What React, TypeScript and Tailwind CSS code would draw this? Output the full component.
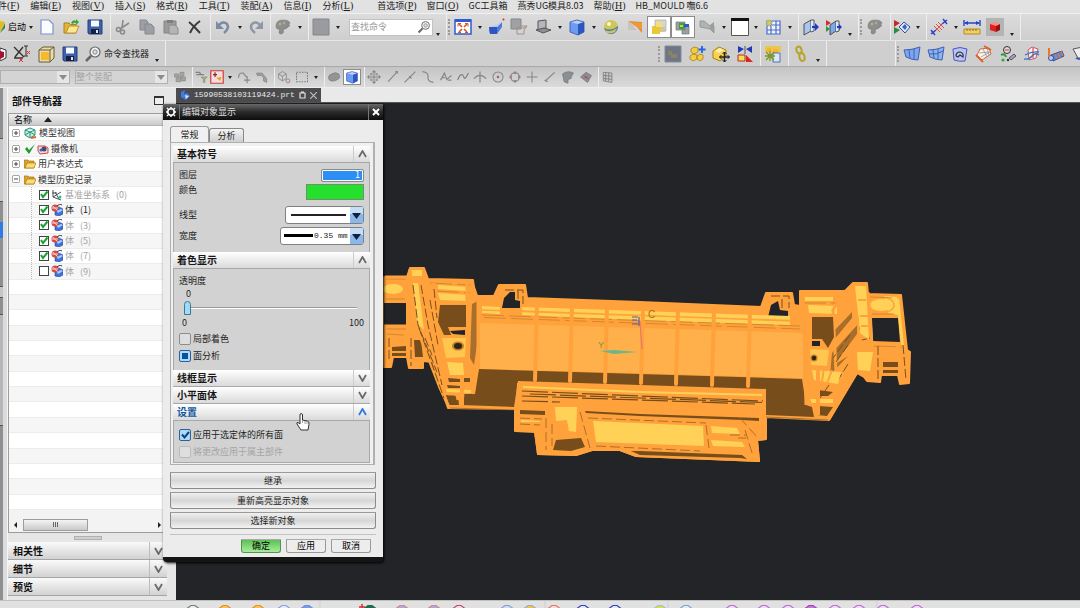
import React from "react";

const CJK = "font-['Noto_Sans_CJK_SC','Liberation_Sans',sans-serif]";

/* ---------- toolbar drawings, all on a 16 x 16 grid ---------- */
const palette = (
  <>
    <path d="M1 7Q1 1 8 1Q14 1 15 4L12 8Q11 11 8 10Q10 15 5 15Q3 14 5 10Q1 11 1 7Z" fill="#8f8f89" stroke="#7a7a75" strokeWidth=".6" />
    <circle cx="5" cy="5" r="1.2" fill="#b9b3a0" />
    <circle cx="9" cy="4" r="1.2" fill="#aaa" />
    <path d="M12 1l3 6-4 3z" fill="#8a8a8a" />
  </>
);
const disk = (
  <>
    <path d="M1 1h14v14H2L1 14z" fill="#3f5fa8" stroke="#24407e" />
    <path d="M4 1.5h8v6H4z" fill="#f4f8ff" />
    <path d="M4 10h8v5H4z" fill="#16203d" />
    <path d="M9 11h2v3H9z" fill="#dfe7f5" />
  </>
);
const ICONS: Record<string, React.ReactNode> = {
  newFile: <path d="M2 1h8l4 4v10H2z" fill="#fbfcff" stroke="#7d8fd6" strokeWidth="1.2" />,
  open: (
    <>
      <path d="M1 14V4h5l1.500 1.500H13V14z" fill="#e2b43c" stroke="#a8802a" />
      <path d="M3 14L6 7h10l-3 7z" fill="#fde98c" stroke="#b8923a" />
      <path d="M8 4q2-4 5-2V0l3 3-3 3V4q-2-1-3 1z" fill="#3ba53a" />
    </>
  ),
  disk,
  cut: (
    <g stroke="#8a8a8a" fill="none" strokeWidth="1.600">
      <path d="M8 1L7 9M14 4L5 10" />
      <circle cx="3.500" cy="10.500" r="2" />
      <circle cx="7.500" cy="13" r="2" />
    </g>
  ),
  copy: (
    <g fill="#9c9fa4" stroke="#858890">
      <path d="M1 1h6l2 2v8H1z" />
      <path d="M6 5h6l3 3v7H6z" />
    </g>
  ),
  paste: (
    <>
      <path d="M1 2h12v12H1z" fill="#9b9b98" stroke="#848480" />
      <path d="M4 1h6v3H4z" fill="#7d7d7b" />
      <path d="M6 6h6l3 3v6H6z" fill="#b3b5b8" stroke="#898b90" />
    </>
  ),
  del: <path d="M2 3Q7 7 13 14M13 2Q6 7 3 14" stroke="#3a3a3a" strokeWidth="2" fill="none" />,
  undo: (
    <>
      <path d="M3 7Q8 1 12 5Q15 9 9 14" stroke="#7b8ba6" strokeWidth="2.500" fill="none" />
      <path d="M1 2v8h8z" fill="#7b8ba6" />
    </>
  ),
  redo: (
    <>
      <path d="M13 7Q8 1 4 5Q1 9 7 14" stroke="#8d97a6" strokeWidth="2.500" fill="none" />
      <path d="M15 2v8H7z" fill="#8d97a6" />
    </>
  ),
  palette,
  square: <path d="M0 0h16v16H0z" fill="#9a9ba1" stroke="#85868b" strokeWidth="1" />,
  fit: (
    <>
      <path d="M0 1h16v14H0z" fill="#fff" stroke="#2d5bd0" strokeWidth="1.500" />
      <path d="M0 0h16v3H0z" fill="#2d5bd0" />
      <path d="M4 5l3 3M12 5L9 8M4 13l3-3M12 13l-3-3" stroke="#d4532a" strokeWidth="1.600" />
      <path d="M3 4.500h3M3 4.500v3M13 4.500h-3M13 4.500v3M3 13.500h3M13 13.500h-3" stroke="#d4532a" />
    </>
  ),
  brush: (
    <>
      <path d="M1 8h8v7H2q-1-3-1-7z" fill="#2f55c4" />
      <path d="M9 8l5-5v5l-5 7z" fill="#4f78dc" />
      <path d="M1 8l7-2 6-3-5 5z" fill="#b4cbf9" />
      <circle cx="15.500" cy=".5" r="1" fill="#e02020" />
    </>
  ),
  shade: (
    <>
      <path d="M0 0h10v10H0z" fill="#9fa1a6" stroke="#85878c" />
      <path d="M6 9l4-2h6l-3 4v4H6zM6 9h7M13 9l3-2" fill="none" stroke="#a5918c" />
    </>
  ),
  plane: (
    <>
      <path d="M3 2l8-1v8l-8 2z" fill="#b4b7ba" stroke="#555" />
      <path d="M1 11l8-2 7 2-8 3z" fill="#8e9194" stroke="#555" />
    </>
  ),
  cube: (
    <>
      <path d="M1 3l7-2 7 2-6 2z" fill="#b9d0fb" />
      <path d="M1 3l8 2v11l-8-3z" fill="#6d9bf2" />
      <path d="M15 3L9 5v11l6-3z" fill="#2c56c2" />
      <path d="M1 3l7-2 7 2v10l-6 3-8-3z" fill="none" stroke="#2b50b0" strokeWidth=".8" />
    </>
  ),
  sphere: (
    <>
      <circle cx="8" cy="8" r="7" fill="#d0c655" />
      <path d="M1 9q7 4 14-2v2q-2 6-7 6t-7-6z" fill="#4a7fb5" />
      <path d="M2 11q6 3 12-2l-2 4q-4 2-8 1z" fill="#cfc65a" />
      <circle cx="6" cy="5" r="2" fill="#fbf7c8" />
    </>
  ),
  flag: (
    <>
      <path d="M1 2l14 1v11l-5-6z" fill="#e58b2e" />
      <path d="M1 2v9h8z" fill="#b9b5ae" />
      <path d="M3 3l12 1v7l-4-3z" fill="#ee9a3c" />
      <path d="M1 2l6 5v4H1z" fill="#c9c4bc" />
    </>
  ),
  flagGray: (
    <>
      <path d="M1 2h4l6 5h4v7l-4-4-5-1-5-1z" fill="#b0b3b4" stroke="#8a8d8e" strokeWidth=".8" />
      <path d="M15 3v11l-4-5V6z" fill="#9b9e9f" />
    </>
  ),
  boxes: (
    <>
      <path d="M4 1h11v11H4z" fill="#d6d6cf" stroke="#aaa" strokeWidth=".7" />
      <path d="M1 7h8v8H1z" fill="#e9c831" />
      <path d="M5 3h6v5H5z" fill="#f3df7a" />
      <path d="M9 8h5v5H9z" fill="#cfc797" />
    </>
  ),
  boxes2: (
    <>
      <path d="M1 3h9v8H1zM7 7h7v8H7z" fill="#9aa0a2" stroke="#777" strokeWidth=".7" />
      <path d="M4 4h6v6H4z" fill="#38a046" />
      <path d="M9 5h5v3H9z" fill="#2d59c9" />
      <path d="M5 6h3v2H5z" fill="#d9d33a" />
    </>
  ),
  window: (
    <>
      <path d="M-.5-.5h17v17h-17z" fill="#fff" stroke="#555" />
      <path d="M-1-1h18v3H-1z" fill="#111" />
    </>
  ),
  gridStar: (
    <>
      <path d="M2 2h13v13H2z" fill="#eef3ff" />
      <path d="M2 2h13v13H2zM6 2v13M11 2v13M2 6h13M2 11h13" stroke="#4b6cc9" fill="none" strokeWidth="1.200" />
      <path d="M4 0v8M0 4h8M1 1l6 6M7 1L1 7" stroke="#d8cf3c" />
    </>
  ),
  door: (
    <>
      <path d="M1 5l7-4v11l-7 4z" fill="#a8c6ee" stroke="#333" strokeWidth=".8" />
      <path d="M8 1h3v11l-3 1" fill="#dce8f8" stroke="#333" strokeWidth=".8" />
      <path d="M9 7h3V4l4 4-4 4V9H9z" fill="#2438c8" />
    </>
  ),
  door2: (
    <>
      <path d="M4 6l6-4v10l-6 4z" fill="#7fa9e6" stroke="#333" strokeWidth=".8" />
      <path d="M10 2h3v10l-3 1" fill="#dce8f8" stroke="#333" strokeWidth=".8" />
      <path d="M0 1l5 3-5 3z" fill="#d32f2f" />
      <path d="M0 7l4 3-4 3z" fill="#2f9a3b" />
      <path d="M11 7h2V5l3 3-3 3V9h-2z" fill="#2438c8" />
    </>
  ),
  cubes: (
    <>
      <path d="M0 1l6 3-6 4z" fill="#c62828" />
      <path d="M0 8l6 3-6 4z" fill="#2e8b3a" />
      <path d="M5 8l5-5 6 5-5 6z" fill="#dce8ff" stroke="#334d9e" />
      <path d="M8 8l3-3 2 3-2 3z" fill="#3d62c4" />
    </>
  ),
  measure: (
    <>
      <path d="M1 15L15 1" stroke="#d9534a" strokeWidth="1" />
      <path d="M0 11l4 5M0 15l5-4M16 5l-4-5M16 1l-5 4" fill="none" stroke="#2745c9" strokeWidth="1.500" />
      <path d="M3 7l6 6M5 5l6 6M7 3l6 6" stroke="#d9534a" />
    </>
  ),
  ruler: (
    <>
      <path d="M0 1v6M16 1v6M1 4h14" stroke="#2745c9" strokeWidth="1.400" />
      <path d="M0 4l4-2v4zM16 4l-4-2v4z" fill="#2745c9" />
      <path d="M0 10h16v5H0z" fill="#f2cf63" stroke="#b28a27" />
      <path d="M3 10v2M6 10v2M9 10v2M12 10v2" stroke="#8a6a1c" />
    </>
  ),
  redCube: (
    <>
      <path d="M-1-1h18v18H-1z" fill="#b4b4b4" />
      <path d="M3 5l5-2 5 2-4 2z" fill="#ff8a80" />
      <path d="M3 5l6 2v6l-6-2z" fill="#e02020" />
      <path d="M13 5L9 7v6l4-2z" fill="#9c0f0f" />
    </>
  ),
  axes: (
    <>
      <path d="M0 1l10 10M9 1L1 11M0 12h9" stroke="#333" strokeWidth="1.400" />
      <path d="M12 0v10M10 0h4M10 10h4" stroke="#333" />
      <path d="M5 12l4 4M9 12l-4 4M13 5l3 3M16 5l-3 3" stroke="#d33" />
    </>
  ),
  goldBox: (
    <>
      <path d="M1 4l4-3h11v11l-4 4H1z" fill="#e9dcb0" stroke="#6b5a2a" />
      <path d="M3 6h8v8H3z" fill="#f4b92c" />
      <path d="M1 4h11v12M12 4l4-3" fill="none" stroke="#6b5a2a" />
    </>
  ),
  lens: (
    <>
      <circle cx="10" cy="6" r="5" fill="#f3f3f3" stroke="#666" strokeWidth="1.200" />
      <circle cx="10" cy="6" r="2.200" fill="#ddd" stroke="#888" />
      <path d="M6 10l-5 5" stroke="#666" strokeWidth="2.500" />
    </>
  ),
  darkBox: (
    <>
      <path d="M0 0h16v16H0z" fill="#6f7683" stroke="#848b98" />
      <path d="M3 5h4v3h5v4H6V9H3z" fill="#8c826a" />
    </>
  ),
  goldPlus: (
    <>
      <path d="M2 3l3-2 4 1v4L5 8 2 6zM1 10l3-2 4 1v4l-4 2-3-2zM8 10l3-2 3 1v4l-3 2-3-2z" fill="#f4cd3c" stroke="#a9801c" strokeWidth=".8" />
      <path d="M13 0v7M9.500 3.500h7" stroke="#2264e0" strokeWidth="1.800" />
    </>
  ),
  goldMove: (
    <>
      <path d="M0 5l6-4 7 3v6l-6 5-7-3z" fill="#f7d350" stroke="#a9801c" />
      <path d="M2 5l5-3 4 2-5 3z" fill="#fff0b0" />
      <path d="M11.500 6v10M6.500 11h10" stroke="#222" strokeWidth="1.500" />
      <path d="M9.500 8l2-2 2 2M9.500 14l2 2 2-2M8.500 9l-2 2 2 2M14.500 9l2 2-2 2" stroke="#222" fill="none" />
    </>
  ),
  bowtie: (
    <>
      <path d="M1 0l6 3-6 4zM15 0L9 3l6 4z" fill="#2238b8" />
      <path d="M8 0v8" stroke="#555" />
      <path d="M1 9h7v6H1z" fill="#f6e14a" stroke="#b23" />
      <path d="M9 9l7 7H9z" fill="#d22" />
    </>
  ),
  starDoc: (
    <>
      <path d="M0 0h16v6H0z" fill="#edc64e" />
      <path d="M8 3h5v4H8zM2 2h4v4H2z" fill="#f5b52b" />
      <path d="M8 7h7v9H8z" fill="#dfe7f7" stroke="#4a6fb8" />
      <path d="M5 5v10M0 10h10M1 6l8 8M9 6l-8 8" stroke="#7b9a1e" strokeWidth="1.300" />
    </>
  ),
  chain: (
    <g fill="none" stroke="#b9a42a" strokeWidth="2">
      <ellipse cx="6" cy="4" rx="2.500" ry="3.500" transform="rotate(-20 6 4)" />
      <ellipse cx="9" cy="11" rx="2.500" ry="4" transform="rotate(-15 9 11)" />
    </g>
  ),
  surf: (
    <>
      <path d="M0 4q8 0 16-3l-2 13q-6 0-12-3z" fill="#7fa6ec" stroke="#3b62b5" />
      <path d="M5 4l1 8M10 3v10" stroke="#3b62b5" fill="none" />
    </>
  ),
  surfGrid: (
    <>
      <path d="M0 4q8 0 16-3l-2 13q-6 0-12-3z" fill="#8fb1ee" stroke="#3b62b5" />
      <path d="M5 4l1 8M10 3v10M1 8q8 1 14-3" stroke="#3b62b5" fill="none" />
    </>
  ),
  surfRing: (
    <>
      <path d="M1 3q7-3 14 0l-2 12q-5 1-11-1z" fill="#b9c4f5" stroke="#4a56c0" />
      <path d="M4 10q0-4 4-4 4 1 3 5l-3-2-2 2z" fill="none" stroke="#333" strokeWidth="1.200" />
    </>
  ),
  surfRed: (
    <>
      <path d="M4 3l9-1 2 6-9 6-5-5z" fill="#f8f2ee" stroke="#c96a3f" />
      <path d="M7 3l4 8M11 2l2 7M3 7l10-1M5 11l9-5" stroke="#888" strokeWidth=".7" />
      <path d="M0 9l7 7M8 0l7 4" stroke="#e0612c" strokeWidth="2" />
    </>
  ),
  ringParts: (
    <>
      <circle cx="7" cy="4" r="3.500" fill="#ddd" stroke="#333" />
      <path d="M5 4h4" stroke="#d33" />
      <path d="M9 12l5-4 2 2-5 4z" fill="#a79be0" stroke="#554" />
      <path d="M1 9q4-2 5 2" stroke="#2f9a3b" strokeWidth="2" fill="none" />
      <circle cx="3" cy="14" r="1.600" fill="#3a3" />
      <circle cx="8" cy="14" r="1.200" fill="#333" />
    </>
  ),
  sheets: (
    <>
      <path d="M4 4l4-3 6 2-2 9-7 2z" fill="#f7efef" stroke="#cc5b5b" />
      <path d="M1 9q7-4 14-3M0 13q5 1 8-3t7-1" stroke="#3977c8" fill="none" strokeWidth="1.300" />
      <path d="M9 2v10" stroke="#c33" />
    </>
  ),
  tube: (
    <>
      <path d="M3 9l11-4 2 5-11 5z" fill="#5a86e0" stroke="#2b4ea8" />
      <circle cx="3" cy="12" r="2.500" fill="#b7cdf7" stroke="#2b4ea8" />
      <path d="M7 8l2 5M10 7l2 5M13 5l2 5" stroke="#e8772e" strokeWidth="1.300" />
      <path d="M1 2v9" stroke="#e8772e" strokeWidth="2" />
    </>
  ),
  cup: (
    <>
      <path d="M1 3q7-3 15 0l-3 9H6z" fill="#eee" stroke="#555" />
      <path d="M4 12q5 3 11-3" stroke="#4a56c0" strokeWidth="2" fill="none" />
    </>
  ),
  /* selection bar, muted */
  tags: <path d="M1 4h5v4H1zM3 9h6v5H3zM8 2h5v5H8zM10 8h5v5h-5zM6 6l4 4" fill="#a5a5a2" stroke="#8d8d8a" />,
  filterY: (
    <>
      <path d="M1 2h5l2 3h4M2 5h7" fill="none" stroke="#7d8485" strokeWidth="1.800" />
      <path d="M8 8h8l-3 3v4h-2v-4z" fill="#b0a878" stroke="#8f8a70" strokeWidth=".8" />
    </>
  ),
  redFrame: (
    <>
      <path d="M0 0h16v16H0z" fill="#f1dede" stroke="#cf3b36" strokeWidth="1.500" />
      <path d="M3 5h5M5.500 2v6" stroke="#8f1f1f" strokeWidth="1.500" />
      <path d="M7 9l7-1-2 5z" fill="#e8a520" />
    </>
  ),
  turn: <path d="M1 9Q1 2 7 3L12 9M12 7v9M8 12h8" stroke="#888" fill="none" strokeWidth="1.500" />,
  pipe: <path d="M1 3h7l6 7v5l-4-2V9L7 6H2z" fill="#9f9f9f" stroke="#858585" />,
  cubeGray: (
    <g fill="none" stroke="#8f8f8f" strokeWidth="1.200">
      <path d="M1 4l5-3 5 3v6l-5 3-5-3zM1 4l5 3 5-3M6 7v6" />
      <circle cx="13" cy="13" r="2.500" stroke="#a77" />
    </g>
  ),
  marquee: <path d="M1 2h14v12H1z" fill="none" stroke="#777" strokeDasharray="2 1.500" strokeWidth="1.300" />,
  blob: <path d="M1 9q0-4 4-5 5-3 9 0 3 5-1 7-4 3-9 2-3-1-3-4z" fill="#929497" stroke="#7b7d80" />,
  moveGray: (
    <>
      <path d="M8 0v16M0 8h16M6 2l2-2 2 2M6 14l2 2 2-2M2 6L0 8l2 2M14 6l2 2-2 2" stroke="#858585" fill="none" strokeWidth="1.300" />
      <path d="M3 3h3v3H3zM10 3h3v3h-3zM3 10h3v3H3zM10 10h3v3h-3z" fill="#9a9a98" />
    </>
  ),
  line1: <path d="M3 14L14 2M13 1h2v2h-2z" stroke="#858585" fill="none" strokeWidth="1.300" />,
  line2: <path d="M1 15L15 1M7 7l3 3" stroke="#858585" strokeWidth="1.400" />,
  curveS: <path d="M1 1q8 1 7 7t7 7" stroke="#858585" fill="none" strokeWidth="1.500" />,
  zig: <path d="M1 12L6 3l3 8 6-5M3 9h4M10 12h5" stroke="#858585" fill="none" strokeWidth="1.500" />,
  wave: <path d="M1 12L4 6q4-3 5 2t6-5" stroke="#8a7c7c" fill="none" strokeWidth="1.500" />,
  arcPlus: <path d="M0 10q8-8 16 0M8 1v14" stroke="#858585" fill="none" strokeWidth="1.500" />,
  target: (
    <>
      <circle cx="8" cy="8" r="6.500" fill="none" stroke="#858585" strokeWidth="1.300" />
      <circle cx="8" cy="8" r="1.600" fill="#8f6a6a" />
    </>
  ),
  ringDots: (
    <>
      <circle cx="8" cy="8" r="5.500" fill="none" stroke="#858585" strokeWidth="1.500" />
      <path d="M6.500 1h3v3h-3zM6.500 12h3v3h-3zM1 6.500h3v3H1zM12 6.500h3v3h-3z" fill="#a07f7f" />
    </>
  ),
  plus: <path d="M8 1v14M1 8h14" stroke="#858585" strokeWidth="1.300" />,
  slash: <path d="M2 13L14 2M1 12l4 2" stroke="#858585" strokeWidth="1.500" />,
  shell: <path d="M1 4q7-5 14-1l-3 5v2l-4 1v5L3 14z" fill="#8b8f92" stroke="#74787b" />,
  diamond: (
    <>
      <path d="M1 8l7-6 7 4-5 9z" fill="#8d8d99" stroke="#777" />
      <path d="M6 7l5 3" stroke="#a55" strokeWidth="2" />
    </>
  ),
  mesh: <path d="M2 2l11 1v12L2 13zM5 2v11M9 2v12M2 6l11 1M2 10l11 1" stroke="#777" fill="#c9c9c9" />,
};

function Icon({ name, small }: { name: string; small?: boolean }) {
  return (
    <svg viewBox="-1 -1 18 18" aria-hidden="true" className={small ? "size-[14px]" : "size-[18px]"}>
      {ICONS[name]}
    </svg>
  );
}

/* A toolbar entry is an icon name or one of: "|" divider, "v" or "V" drop arrow, ":" grip.
   "*" before a name frames the button as pressed, "-" makes it narrow. */
function Tools({ items, small }: { items: string[]; small?: boolean }) {
  return (
    <>
      {items.map((it, i) => {
        if (it === "|") return <span key={i} className="h-full w-1 shrink-0 border-r border-[#eeeeee]" />;
        if (it === ":") return <span key={i} className="mx-px h-4 w-[2px] shrink-0 border-l-2 border-dotted border-[#9a9a9a]" />;
        if (it === "v" || it === "V")
          return (
            <button key={i} aria-label="更多" className={it === "V" ? "flex h-3 w-[10px] shrink-0 items-end justify-center self-end pb-1" : "flex w-[10px] shrink-0 items-center justify-center"}>
              <svg viewBox="0 0 4 3" className="h-[3px] w-1">
                <path d="M0 0h4L2 3z" fill="#222" />
              </svg>
            </button>
          );
        const framed = it.startsWith("*");
        const narrow = it.startsWith("-");
        const name = framed || narrow ? it.slice(1) : it;
        const size = small ? (narrow ? "h-4 w-4" : "h-4 w-[18px]") : narrow ? "h-[22px] w-[22px]" : "h-[22px] w-6";
        return (
          <button key={i} aria-label={name} className={`flex shrink-0 items-center justify-center ${size} ${framed ? "border border-[#8d8d8d] bg-white" : ""}`}>
            <Icon name={name} small={small} />
          </button>
        );
      })}
    </>
  );
}

const MENUS: [string, string][][] = [
  [["文件", "F"], ["编辑", "E"], ["视图", "V"], ["插入", "S"], ["格式", "R"], ["工具", "T"], ["装配", "A"], ["信息", "I"], ["分析", "L"]],
  [["首选项", "P"], ["窗口", "O"], ["GC工具箱", ""], ["燕秀UG模具8.03", ""], ["帮助", "H"], ["HB_MOULD 嘸6.6", ""]],
];

function Header() {
  return (
    <header className="shrink-0">
      <nav className="-ml-[11px] flex h-[13px] gap-[24px]">
        {MENUS.map((group, g) => (
          <div key={g} className={g === 0 ? "flex gap-[11px]" : "flex gap-[10px]"}>
            {group.map(([t, k]) => (
              <a key={t} href="#" className="flex h-[11px] shrink-0 items-center whitespace-nowrap text-[9px] leading-[11px] text-[#1c1c1c]">
                {t}
                {k && (
                  <span className="font-['Liberation_Serif',serif] text-[10px] leading-[11px]">
                    (<u>{k}</u>)
                  </span>
                )}
              </a>
            ))}
          </div>
        ))}
      </nav>
      <div className="flex h-[27px] items-center border-t border-[#f0f0f0] bg-gradient-to-b from-[#dcdcdc] to-[#cfcfcf]">
        <button className="flex w-[35px] shrink-0 items-center gap-[3px] text-[9px]">
          <svg viewBox="0 0 5 12" className="h-3 w-[5px]">
            <path d="M0 0l5 1-3 6-2 4z" fill="#e6b91f" />
            <path d="M0 12L5 2v5z" fill="#2d8a4b" />
          </svg>
          启动
          <svg viewBox="0 0 4 3" className="h-[3px] w-1">
            <path d="M0 0h4L2 3z" fill="#222" />
          </svg>
        </button>
        <Tools items={["newFile", "open", "disk", "|", "cut", "copy", "paste", "del", "|", "undo", "v", "-redo", "|", "palette", "v", "|", "square", "v"]} />
        <label className="ml-[6px] flex h-[17px] w-[84px] shrink-0 items-center border border-[#c2c2c2] bg-white px-px">
          <input aria-label="查找命令" placeholder="查找命令" className="w-full min-w-0 bg-transparent text-[9px] outline-none placeholder:text-[#9a9a9a]" />
          <svg viewBox="-1 -1 18 18" className="size-[14px] shrink-0">{ICONS.lens}</svg>
        </label>
        <Tools items={["V", "|", ":", "fit", "v", "-brush", "shade", "plane", "v", "cube", "v", "sphere", "flag", "*boxes", "*boxes2", "flagGray", "v", "-window", "v", "gridStar", "v", "|", "door", "-door2", "V", "|", ":", "palette", "|", "-cubes", "v", "|", "measure", "v", "-ruler", "redCube", "V", "|"]} />
      </div>
      <div className="flex h-[27px] items-center overflow-hidden border-b border-[#a9a9a9] border-t border-t-[#e6e6e6] bg-[#cfcfcf]">
        <svg viewBox="0 0 7 14" className="mr-[3px] h-[14px] w-[7px] shrink-0">
          <path d="M0 1l6 2v8l-6 3z" fill="#fff" stroke="#333" />
          <path d="M0 4l4 1v5l-4 2z" fill="#a3132e" />
        </svg>
        <Tools items={["axes", "goldBox", "disk"]} />
        <button className="ml-[2px] flex shrink-0 items-center gap-[2px] text-[9px] text-[#222]">
          <Icon name="lens" />
          <span className="w-[48px] text-left">命令查找器</span>
        </button>
        <Tools items={["V", "|"]} />
        <span className="w-[491px] shrink-0" />
        <Tools items={[":", "darkBox", "goldPlus", "goldMove", "bowtie", "|", "starDoc", "|", "chain", "V", "|"]} />
        <span className="w-[65px] shrink-0" />
        <Tools items={["|", ":", "surf", "surfGrid", "surfRing", "surfRed", "ringParts", "sheets", "tube", "cup"]} />
      </div>
      <div className="flex h-[21px] items-center border-b border-[#eeeeee] bg-gradient-to-b from-[#c4c4c4] to-[#dadada]">
        <Combo label="类型过滤器" value="" width="w-[70px]" />
        <span className="w-[5px] shrink-0" />
        <Combo label="选择范围" value="整个装配" width="w-[93px]" />
        <span className="w-[3px] shrink-0" />
        <Tools small items={["tags", "|", "-filterY", "-redFrame", "v", "turn", "pipe", "|", "cubeGray", "marquee", "v", "|", "blob", "*cube", "|", "moveGray", "line1", "line2", "curveS", "zig", "-wave", "arcPlus", "target", "-ringDots", "plus", "slash", "shell", "diamond", "|", "mesh"]} />
      </div>
    </header>
  );
}

function Combo({ label, value, width }: { label: string; value: string; width: string }) {
  return (
    <span className={`relative flex h-[14px] shrink-0 items-center border border-[#b0b0b0] bg-[#d4d4d4] ${width}`}>
      <select aria-label={label} disabled className="h-full w-full appearance-none bg-transparent text-[9px] leading-3 text-[#a2a2a2] opacity-100">
        <option>{value}</option>
      </select>
      <svg viewBox="0 0 12 12" className="pointer-events-none absolute right-0 h-full w-3">
        <path d="M0 0h12v12H0z" fill="#e6e6e6" />
        <path d="M2 4h8L6 9z" fill="#8c8c8c" />
      </svg>
    </span>
  );
}

/* ---------- part navigator ---------- */
function Expander({ open }: { open: boolean }) {
  return (
    <svg viewBox="0 0 8 8" className="size-2 shrink-0">
      <path d="M1 .5h6l.5.5v6l-.5.5H1L.5 7V1z" fill="#fff" stroke="#a8a8a8" />
      <path d={open ? "M2 4h4" : "M2 4h4M4 2v4"} stroke="#444" />
    </svg>
  );
}

const folder = (
  <svg viewBox="0 0 12 11" className="h-[11px] w-3 shrink-0">
    <path d="M0 10V2h4l1 1h5v7z" fill="#d9a22e" stroke="#a77718" strokeWidth=".7" />
    <path d="M1 10l2-5h9l-2 5z" fill="#fbdc6d" stroke="#a77718" strokeWidth=".7" />
  </svg>
);
const bodyIcon = (
  <svg viewBox="0 0 12 12" className="size-3 shrink-0">
    <path d="M4 5l4-2 4 2v5l-4 2-4-1z" fill="#3f72df" stroke="#24489c" strokeWidth=".6" />
    <path d="M6 7l4-2 2 1-5 3z" fill="#b7cdf8" />
    <circle cx="4" cy="4" r="3.500" fill="#d94a43" />
    <path d="M1.500 2l5 4.500M1 4h6" stroke="#f7dcd8" />
    <path d="M6 2l3-2 2 1" stroke="#333" fill="none" />
  </svg>
);

const BRANCHES = [
  {
    text: "模型视图",
    open: false,
    icon: (
      <svg viewBox="0 0 13 13" className="size-[13px] shrink-0">
        <path d="M6 1l5 2v5l-5 3-5-3V3zM1 3l5 2 5-2M6 5v6M1 8l5-3 5 3" fill="#cdebe0" stroke="#259b7d" />
        <path d="M7 11l5-1" stroke="#e0672f" strokeWidth="2" />
      </svg>
    ),
  },
  {
    text: "摄像机",
    open: false,
    icon: (
      <svg viewBox="0 0 24 12" className="ml-px h-3 w-6 shrink-0">
        <path d="M0 6l4 5 6-10-6 6-2-3z" fill="#189a2d" />
        <path d="M13 3h7l3 2v5l-8 1-2-3z" fill="#f3dada" stroke="#c9484b" />
        <circle cx="19" cy="6" r="2.500" fill="#454a6b" />
        <circle cx="16" cy="7" r="1.500" fill="#3d63cc" />
      </svg>
    ),
  },
  { text: "用户表达式", open: false, icon: folder },
  { text: "模型历史记录", open: true, icon: folder },
];

const LEAVES = [
  { text: "基准坐标系 (0)", on: true, dark: false },
  { text: "体 (1)", on: true, dark: true },
  { text: "体 (3)", on: true, dark: false },
  { text: "体 (5)", on: true, dark: false },
  { text: "体 (7)", on: true, dark: false },
  { text: "体 (9)", on: false, dark: false },
];

const ROW = "flex min-h-0 flex-1 basis-0 items-center border-b border-[#ececec] text-[9px] odd:bg-white even:bg-[#f6f6f6]";

function Chevron({ up, blue }: { up?: boolean; blue?: boolean }) {
  return (
    <svg viewBox="0 0 9 8" className="h-2 w-[9px] shrink-0">
      <path d={up ? "M1 7l3.500-6L8 7" : "M1 1l3.500 6L8 1"} fill="none" stroke={blue ? "#2a7ae0" : "#6a6a6a"} strokeWidth="1.800" />
    </svg>
  );
}

function Navigator() {
  return (
    <aside className="flex w-[169px] shrink-0 flex-col border-l border-[#f5f5f5] bg-[#e6e6e6] pr-[9px]">
      <div className="flex h-[25px] items-center justify-between pl-1">
        <h2 className="text-[10px] font-bold text-[#111]">部件导航器</h2>
        <button aria-label="浮动" className="mr-[3px] h-[9px] w-[10px] border border-t-2 border-[#333] bg-[#eee]" />
      </div>
      <div className="flex min-h-0 flex-1 flex-col border border-[#9c9c9c] bg-white">
        <div className="flex h-3 shrink-0 items-center gap-3 border-b border-[#b5b5b5] bg-gradient-to-b from-[#f0f0f0] to-[#cbcbcb] pl-[5px] text-[9px] leading-[11px]">
          名称
          <svg viewBox="0 0 8 5" className="h-[5px] w-2">
            <path d="M0 5h8L4 0z" fill="#222" />
          </svg>
        </div>
        <ul className="flex min-h-0 flex-1 flex-col overflow-hidden">
          {BRANCHES.map((b) => (
            <li key={b.text} className={ROW}>
              <span className="mr-[4px] ml-[3px] flex">
                <Expander open={b.open} />
              </span>
              {b.icon}
              <span className="ml-[2px] text-[#333]">{b.text}</span>
            </li>
          ))}
          {LEAVES.map((l) => (
            <li key={l.text} className={ROW}>
              <span className="ml-[22px] h-full w-2 shrink-0 border-l border-dotted border-[#bbb]" />
              <label className="flex items-center">
                <span className="relative mr-[2px] flex">
                  <input type="checkbox" defaultChecked={l.on} className="peer size-[10px] appearance-none border border-[#444] bg-white" />
                  <svg viewBox="0 0 10 10" className="pointer-events-none absolute inset-0 hidden size-[10px] peer-checked:block">
                    <path d="M2 4l2 3 4.500-5.500" stroke="#17a32e" strokeWidth="2" fill="none" />
                  </svg>
                </span>
                {l.text.startsWith("基") ? (
                  <svg viewBox="0 0 12 12" className="size-3 shrink-0">
                    <path d="M2 1v7l8 3M2 8l8-5M4 3l4 7M1 4h5" stroke="#4d5157" fill="none" />
                    <circle cx="9" cy="8" r="1.500" fill="#3b9" />
                  </svg>
                ) : (
                  bodyIcon
                )}
                <span className={l.dark ? "ml-[2px] text-[#222]" : "ml-[2px] text-[#a3a3a3]"}>
                  {l.text.split(" ")[0]}
                  <span className="ml-[6px]">{l.text.split(" ")[1]}</span>
                </span>
              </label>
            </li>
          ))}
          {Array.from({ length: 15 }, (_, i) => (
            <li key={i} className={ROW} />
          ))}
        </ul>
        <div className="flex h-[22px] shrink-0 items-center justify-between bg-[#f3f3f3] px-[5px] pt-[7px]">
          <svg viewBox="0 0 3 6" className="h-[6px] w-[3px]"><path d="M3 0v6L0 3z" fill="#222" /></svg>
          <button aria-label="水平滚动" className="mr-auto ml-[6px] flex h-3 w-[65px] items-center justify-center gap-px border border-[#9d9d9d] bg-gradient-to-b from-[#f4f4f4] to-[#c9c9c9]">
            <i className="h-[5px] w-px bg-[#666]" />
            <i className="h-[5px] w-px bg-[#666]" />
            <i className="h-[5px] w-px bg-[#666]" />
          </button>
          <svg viewBox="0 0 3 6" className="h-[6px] w-[3px]"><path d="M0 0v6l3-3z" fill="#222" /></svg>
        </div>
      </div>
      <div className="flex h-[9px] shrink-0 items-center justify-center">
        <span className="h-1 w-7 border border-[#b0b0b0] bg-[#cfcfcf]" />
      </div>
      <div className="mb-1 flex shrink-0 flex-col">
        {["相关性", "细节", "预览"].map((t) => (
          <button key={t} className="flex h-[18px] items-center justify-between border-b border-[#a5a5a5] bg-gradient-to-b from-[#fafafa] to-[#d2d2d2] pl-[5px] text-[10px] font-bold text-[#111]">
            {t}
            <span className="flex h-full w-[18px] items-center justify-center border-l border-[#bdbdbd]">
              <Chevron />
            </span>
          </button>
        ))}
      </div>
    </aside>
  );
}

/* ---------- shaded model ---------- */
const RIBS = [537, 572, 607, 643, 678, 714, 750];

function Model() {
  return (
    <svg viewBox="176 103 904 497" preserveAspectRatio="xMidYMid meet" role="img" aria-label="模型" className="block min-h-0 w-full flex-1">
      <path
        d="M384 277H407L410 268H424L428 279L473 280L475 296L494 296L499 285H525L527 298L640 302L761 307L766 293H792L794 305L800 306V291H845L853 283H867L868 294L901 295L907 350L910 352L909 383L900 384L898 375H881L880 382L867 381L864 377L857 373L829 420L766 417V439L757 440L759 461L636 456L620 450H592L576 455L538 454L535 432L515 431V409L448 408L433 362L423 361V368H409L407 357H393L391 367H384Z"
        fill="#ffa23c"
        stroke="#ffa23c"
        strokeWidth="2"
        strokeLinejoin="round"
      />
      <g fill="#232428">
        <path d="M384 303H406V325H384zM502 308L504 298L510 292H515V300L520 301V308zM768 317L771 305L778 301L780 310L788 311V317z" />
        <path d="M872 318L898 318L900 342L873 341z" />
      </g>
      {/* deck */}
      <path d="M480 323L640 328L803 333V378L640 373L480 369z" fill="#ffb04b" />
      <g fill="#ffd257">
        <path d="M482 306L500 307V314L482 313zM522 307L640 311L790 316V325L640 320L522 315z" />
        <path d="M438 285L467 287V291L438 289zM438 293L468 295V301L440 300z" />
        <ellipse cx="393" cy="289" rx="10" ry="5" />
        <path d="M411 270H422V276H411zM412 283L418 283L424 330L414 320z" />
        <path d="M805 297H833V301H805zM808 305L837 306V314L809 313z" />
        <ellipse cx="881" cy="305" rx="11" ry="6" />
        <path d="M884 296L899 297L904 345L901 345L898 315L888 313z" />
      </g>
      <g fill="none" stroke="#ffa23c" strokeWidth="1.500">
        <path d="M480 310L803 321M480 316L803 328M480 319L803 331M522 311L790 321" />
        <ellipse cx="393" cy="289" rx="12" ry="7" />
        <ellipse cx="881" cy="305" rx="13" ry="8" />
      </g>
      <g fill="none" stroke="#b87426" strokeWidth=".6" strokeDasharray="22 5">
        <path d="M482 315L800 326M484 317.500L800 329M430 283L470 285M437 291L470 293M804 303H836" />
        <path d="M386 279H407M386 299H405M387 329H406M387 334L404 335M870 297L899 298M872 314H896M874 346L902 347" />
      </g>
      {/* undersides */}
      <g fill="#784d1c">
        <path d="M479 369L640 374L802 379L806 405L812 407L814 417L766 415V389L640 385L518 381L514 407L461 405L464 394L475 394z" />
        <path d="M446 395L458 396L459 405L449 405zM818 406L833 407L827 416L817 415z" />
        <path d="M414 340L421 340L423 357L415 357zM392 347L406 346V351H392zM392 353H406V356H392zM883 362H898V367H883zM883 370H898V373H883z" />
      </g>
      <g fill="#a86e2c">
        <path d="M472 304L478 301L477 345L474 365L470 358z" />
        <path d="M832 353L857 325L857 334L834 365L848 356L830 375z" />
        <path d="M834 331L852 312V318L833 341z" />
      </g>
      {/* left and right braces */}
      <g fill="none" stroke="#ffa23c" strokeWidth="3">
        <path d="M410 269L416 326L440 388L449 407M425 275L432 330L450 395M433 283L446 345L458 400M467 281L466 360L462 404" />
        <path d="M868 292L872 345L857 372L829 419M853 284L855 325L830 352L812 380M845 291L833 310L836 372L814 404M803 300L806 405" />
        <path d="M385 277H407M471 280L478 300V365L472 394M407 276L409 326H384" />
      </g>
      <g fill="none" stroke="#7c4f1d" strokeWidth="1" strokeDasharray="9 3">
        <path d="M413 285L418 325L437 372M421 285L428 325L442 385M430 300L438 345M419 328L444 398M434 289L437 318" />
        <path d="M864 290L867 338M857 290L860 330M850 335L833 358M848 345L836 362M862 340L870 338M848 364L838 380M829 385L820 398" />
        <path d="M389 338V362M411 338V366M425 338L432 355M878 346V380M903 345L906 380M505 290H523V304M771 296H789V308M518 290V299M782 299V309" />
      </g>
      {/* end bays */}
      <path d="M440 305L466 305V335L444 335L438 322zM812 317H833L834 337L828 348L822 339H812z" fill="#784d1c" />
      <path d="M448 327H467V337H452zM811 339H822V349H811z" fill="#ffa23c" />
      <path d="M450 331L465 330V335L453 334zM812 341H820V346H812z" fill="#232428" />
      <path d="M442 338H466L465 357L446 358zM810 349L829 350L827 366L811 365z" fill="#ffc650" />
      <path d="M447 362L463 363L464 375L450 375zM446 389L471 390V393L447 392zM812 370L841 372L838 384L814 380zM810 399H833V403H812z" fill="#ffd257" />
      <path d="M855 286H866L869 340L860 333zM857 352L873 352L870 371L858 370z" fill="#ffd257" />
      <path d="M448 378L460 379V382H449zM462 378H470V382H462zM447 385L460 386V388H448zM818 390L833 392L828 396H818z" fill="#784d1c" />
      <path d="M824 368L822 382M832 370L826 386M858 300h8M860 316h8M861 326h7" stroke="#ffa23c" strokeWidth="2" />
      <path d="M462 377V405M818 366V415" stroke="#ffa23c" strokeWidth="4" />
      <ellipse cx="458" cy="346" rx="6" ry="4.500" fill="#c07c2c" />
      <ellipse cx="458" cy="346" rx="4" ry="3" fill="#2d2416" />
      <circle cx="814" cy="358" r="3.500" fill="#c07c2c" />
      <circle cx="814" cy="358" r="2.200" fill="#2d2416" />
      <g stroke="#ffa23c" strokeWidth="4" strokeLinecap="round">
        {RIBS.map((x) => (
          <path key={x} d={`M${x} ${304 + (x - 537) * 0.035}L${x - 2} ${380 + (x - 537) * 0.028}`} />
        ))}
      </g>
      <path d="M450 408L514 410M766 417L828 420" stroke="#784d1c" strokeWidth=".6" />
      {/* lower bracket */}
      <path d="M518 384L640 388L765 391V439L757 440L759 461L636 456L620 450H592L576 455L538 454L535 431L515 430z" fill="#ffa23c" stroke="#ffa23c" strokeWidth="2" />
      <g fill="#ffd257">
        <path d="M555 407L577 407L576 432L569 431L567 420L556 421zM593 421L703 426L704 446L596 442zM711 426L737 428L740 434L712 433zM523 386L640 391L762 394V396L640 393L523 388z" />
        <path d="M711 440L742 442L745 447L713 446zM521 420L540 421V422H521z" />
      </g>
      <g fill="#784d1c">
        <path d="M520 410L545 411V415L520 414zM556 440L581 438L585 447L571 451L553 450zM585 411L640 414L759 418V421L742 420L640 416L586 413zM631 451L640 451L742 455L747 459L740 458L640 455z" />
      </g>
      <g fill="none" stroke="#784d1c" strokeWidth="1.200" strokeDasharray="26 4">
        <path d="M522 391L640 396L763 401M522 396L640 400L755 404M530 394L640 398L762 402.500M522 401L560 402" />
      </g>
      <g fill="none" stroke="#99611f" strokeWidth=".8" strokeDasharray="10 4">
        <path d="M520 418L542 419M520 424L540 425M546 418V450M552 424V446M580 412L590 448M588 418L706 423M596 446L700 451M706 425L709 448M740 418L758 438M745 430L753 456M730 435H746M738 438H746" />
      </g>
      {/* work coordinate triad */}
      <path d="M600 351L614 350L638 352L614 354z" fill="#6fb58a" />
      <path d="M640 322L642 349" stroke="#e5776e" strokeWidth="1.200" />
      <path d="M632 317h6M632 320h5M632 324h6M639 317v9" stroke="#5a5aa8" strokeWidth="1.200" />
      <text x="598" y="348" fontSize="9" fill="#6f9c2c" className="font-['Liberation_Sans',sans-serif]">Y</text>
      <text x="648" y="318" fontSize="10" fill="#b3641c" className="font-['Liberation_Sans',sans-serif]">C</text>
    </svg>
  );
}

/* ---------- edit display dialog ---------- */
function SectionHead({ title, up, blue }: { title: string; up?: boolean; blue?: boolean }) {
  return (
    <button className={`flex h-[17px] w-full shrink-0 items-center justify-between border-b border-[#a8a8a8] bg-gradient-to-b from-white to-[#dadada] pl-1 text-[10px] leading-4 font-bold ${blue ? "text-[#14599f]" : "text-[#161616]"}`}>
      {title}
      <span className="flex h-full w-[17px] items-center justify-center border-l border-[#cccccc]">
        <Chevron up={up} blue={blue} />
      </span>
    </button>
  );
}

function Check({ label, kind, disabled }: { label: string; kind: "off" | "on" | "part"; disabled?: boolean }) {
  return (
    <label className={`flex h-[17px] items-center gap-[2px] text-[9px] ${disabled ? "text-[#a5a5a5]" : "text-[#222]"}`}>
      <span className="relative flex">
        <input
          type="checkbox"
          defaultChecked={kind !== "off"}
          disabled={disabled}
          className="size-3 appearance-none rounded-[2px] border border-[#8d8d8d] bg-[#dedede] checked:border-[#2f5f94] checked:bg-[#a9dcf8] disabled:border-[#bbb]"
        />
        {kind !== "off" && (
          <svg viewBox="0 0 12 12" className="pointer-events-none absolute inset-0 size-3">
            {kind === "on" ? <path d="M3 5.500l2.500 3L10 3" fill="none" stroke="#173f86" strokeWidth="2" /> : <path d="M3 3h6v6H3z" fill="#0b4fa3" />}
          </svg>
        )}
      </span>
      {label}
    </label>
  );
}

function DropSelect({ label, value, width, thick }: { label: string; value: string; width: string; thick?: boolean }) {
  return (
    <span className={`relative flex h-[18px] items-center rounded-[3px] border border-[#808080] bg-white ${width}`}>
      <span className={thick ? "ml-[3px] h-[3px] w-[29px] shrink-0 bg-black" : "ml-[5px] h-[2px] w-[55px] shrink-0 bg-[#222]"} />
      <select id={label} className="h-full min-w-0 flex-1 appearance-none bg-transparent pl-px font-['Liberation_Mono',monospace] text-[8px] outline-none">
        <option>{value}</option>
      </select>
      <svg viewBox="0 0 13 16" className="pointer-events-none absolute right-0 h-full w-[13px]">
        <path d="M0 0h13v16H0z" fill="#8ab8ec" />
        <path d="M0 0h13v7H0z" fill="#c4def8" />
        <path d="M2 6h9l-4.500 6z" fill="#12203a" />
      </svg>
    </span>
  );
}

const SECTION = "border-x border-[#a9a9a9] bg-[#d2d2d2] px-[5px] text-[9px] text-[#222]";
const FIELD = "flex items-center justify-between";
const WIDE = "h-4 border border-t-0 border-[#8b8b8b] rounded-b-[3px] bg-gradient-to-b from-[#f0f0f0] via-[#d6d6d6] to-[#f2f2f2] text-[9px] leading-[14px] text-[#222] shadow-[0_-1px_0_#9a9a9a]";
const ACTION = "h-[13px] w-10 rounded-b-[3px] border border-t-0 text-[9px] leading-3 shadow-[0_-1px_0_#aaa]";

function DisplayDialog() {
  return (
    <section role="dialog" aria-label="编辑对象显示" className="absolute top-[104px] left-[163px] flex w-[220px] flex-col rounded-b-[4px] border-b-[5px] border-[#151515] bg-[#ececec] shadow-[1px_1px_3px_#000]">
      <header className="flex h-[16px] items-center bg-gradient-to-b from-[#6a6a6a] via-[#2a2a2a] to-[#0d0d0d] text-[9px] leading-[14px] text-[#dcdcdc]">
        <svg viewBox="0 0 12 12" className="mx-[2px] size-3">
          <circle cx="6" cy="6" r="3.200" fill="none" stroke="#fff" strokeWidth="1.600" />
          <path d="M6 1v2M6 9v2M1 6h2M9 6h2M2 2l1 1M9 9l1 1M10 2L9 3M3 9l-1 1" stroke="#fff" strokeWidth="1.500" />
        </svg>
        <h2 className="flex-1 border-l border-[#777] pl-[2px]">编辑对象显示</h2>
        <button aria-label="关闭" className="flex h-full w-[15px] items-center justify-center border-l border-[#777]">
          <svg viewBox="0 0 8 8" className="size-2">
            <path d="M1 1l6 6M7 1L1 7" stroke="#fff" strokeWidth="2" />
          </svg>
        </button>
      </header>
      <div className="flex flex-col px-[7px] pt-[6px]">
        <div role="tablist" className="flex items-end text-[9px] leading-3 text-[#222]">
          <button role="tab" aria-selected="true" className="h-[16px] w-[39px] rounded-t-[3px] border border-b-0 border-[#999] bg-[#f0f0f0]">常规</button>
          <button role="tab" aria-selected="false" className="h-[14px] w-[35px] rounded-t-[3px] border border-b-0 border-[#888] bg-gradient-to-b from-[#f4f4f4] to-[#cfcfcf]">分析</button>
        </div>
        <div className="mr-px flex flex-col border border-r-2 border-[#b0b0b0] bg-[#f0f0f0] pt-[3px] pr-[3px] pb-px pl-[2px]">
          <SectionHead title="基本符号" up />
          <div className={`${SECTION} flex h-[89px] flex-col pt-1`}>
            <div className={`${FIELD} h-4`}>
              <label htmlFor="layer">图层</label>
              <input id="layer" defaultValue="1" className="h-[13px] w-[43px] rounded-[2px] border border-[#8b8b8b] bg-[#2b8ff5] px-[3px] text-right text-[9px] text-white outline-none ring-1 ring-white ring-inset" />
            </div>
            <div className={`${FIELD} h-[18px] items-start`}>
              <span className="leading-[13px]">颜色</span>
              <button aria-label="颜色" className="mt-px h-4 w-[58px] border border-[#6f8f6f] bg-[#25e02c]" />
            </div>
            <div className={`${FIELD} mt-[3px] h-[21px]`}>
              <label htmlFor="线型">线型</label>
              <DropSelect label="线型" value="" width="w-[79px]" />
            </div>
            <div className={`${FIELD} h-[21px]`}>
              <label htmlFor="宽度">宽度</label>
              <DropSelect label="宽度" value="0.35 mm" width="w-[84px]" thick />
            </div>
          </div>
          <SectionHead title="着色显示" up />
          <div className={`${SECTION} flex h-[101px] flex-col pt-[6px]`}>
            <label htmlFor="alpha" className="leading-3">透明度</label>
            <output className="ml-[7px] leading-[13px]">0</output>
            <input
              id="alpha"
              type="range"
              min="0"
              max="100"
              defaultValue="0"
              className="ml-[5px] h-4 w-[173px] appearance-none bg-transparent [&::-webkit-slider-runnable-track]:h-[2px] [&::-webkit-slider-runnable-track]:border-t [&::-webkit-slider-runnable-track]:border-[#9a9a9a] [&::-webkit-slider-runnable-track]:bg-white [&::-webkit-slider-thumb]:-mt-[7px] [&::-webkit-slider-thumb]:h-[14px] [&::-webkit-slider-thumb]:w-[7px] [&::-webkit-slider-thumb]:appearance-none [&::-webkit-slider-thumb]:rounded-t-[4px] [&::-webkit-slider-thumb]:border [&::-webkit-slider-thumb]:border-[#47738f] [&::-webkit-slider-thumb]:bg-[#9bdcf7]"
            />
            <div className="flex justify-between pl-[3px] leading-[14px]">
              <span>0</span>
              <span>100</span>
            </div>
            <Check label="局部着色" kind="off" />
            <Check label="面分析" kind="part" />
          </div>
          <SectionHead title="线框显示" />
          <SectionHead title="小平面体" />
          <SectionHead title="设置" up blue />
          <div className={`${SECTION} h-[42px] border-b pt-[5px]`}>
            <Check label="应用于选定体的所有面" kind="on" />
            <Check label="将更改应用于属主部件" kind="off" disabled />
          </div>
        </div>
        <div className="mt-2 flex flex-col gap-1">
          <button className={WIDE}>继承</button>
          <button className={WIDE}>重新高亮显示对象</button>
          <button className={WIDE}>选择新对象</button>
        </div>
        <div className="mt-[5px] flex justify-end gap-[5px] border-t border-[#c2c2c2] pt-[5px] pr-[5px] pb-1">
          <button className={`${ACTION} border-[#5f8d5a] bg-gradient-to-b from-[#5cbf55] to-[#a4ee96]`}>确定</button>
          <button className={`${ACTION} border-[#999] bg-[#ededed]`}>应用</button>
          <button className={`${ACTION} border-[#999] bg-[#ededed]`}>取消</button>
        </div>
      </div>
      <svg viewBox="0 0 14 18" className="absolute top-[309px] left-[133px] h-[18px] w-[14px]">
        <path d="M4 2q0-1.500 1.200-1.500T6.500 2v5l5 1.200q2 .5 1.500 3L12 17H5L1 11q-.7-1.500 1-1.600L4 11z" fill="#fff" stroke="#333" />
        <path d="M6.500 7v3M9 8v3M11 8.500V11" stroke="#777" strokeWidth=".7" />
      </svg>
    </section>
  );
}

/* ---------- bottom toolbar, mostly below the window edge ---------- */
const DOCK = [
  { x: 193, c: "#777", f: "#eee" }, { x: 225, c: "#e0902c", f: "#f7c35a" }, { x: 258, c: "#e0902c", f: "#f7c35a" }, { x: 284, c: "#8f9fd8", f: "#e8ecff" },
  { x: 307, c: "#6f8fd8", f: "#7f9ae8" }, { x: 370, c: "#1e6b50", f: "#1e6b50" }, { x: 402, c: "#d98a6a", f: "#9fb0e8" }, { x: 434, c: "#d98a6a", f: "#9fb0e8" },
  { x: 459, c: "#c24b5c", f: "#dfe3ff" }, { x: 507, c: "#7fa3c8", f: "#cfdcf0" }, { x: 530, c: "#8fb0d0", f: "#f5c04a" }, { x: 554, c: "#d97a6c", f: "#f3dedb" },
  { x: 583, c: "#2942b8", f: "#e8ecff" }, { x: 615, c: "#2942b8", f: "#e8ecff" }, { x: 660, c: "#7fd0dc", f: "#f1d24a" }, { x: 686, c: "#7fa3c8", f: "#e4edf7" },
  { x: 732, c: "#b96fca", f: "#f1dcf5" }, { x: 764, c: "#b96fca", f: "#f1dcf5" }, { x: 788, c: "#b96fca", f: "#f1dcf5" }, { x: 811, c: "#9a44b4", f: "#c27bd6" },
  { x: 835, c: "#b96fca", f: "#f1dcf5" }, { x: 859, c: "#b96fca", f: "#f1dcf5" }, { x: 883, c: "#b96fca", f: "#f1dcf5" }, { x: 917, c: "#b96fca", f: "#f1dcf5" },
];

function Dock() {
  return (
    <footer className="h-2 shrink-0 overflow-hidden border-t border-[#bfbfbf] bg-[#e1e1e1]">
      <svg viewBox="0 0 1080 8" preserveAspectRatio="xMinYMin slice" className="block h-2 w-[1080px]">
        {DOCK.map((d) => (
          <path key={d.x} d={`M${d.x - 8} 9L${d.x - 2} 4.500H${d.x + 2}L${d.x + 8} 9`} fill={d.f} stroke={d.c} strokeWidth="1.200" />
        ))}
        <path d="M359 6h6M362 3v6" stroke="#c33" strokeWidth="1.500" />
        <path d="M320 0v8M545 0v8M668 0v8M877 0v8" stroke="#cdcdcd" />
      </svg>
    </footer>
  );
}

export default function App() {
  return (
    <div className={`relative flex h-screen flex-col overflow-hidden bg-[#e2e2e2] ${CJK}`}>
      <Header />
      <main className="flex min-h-0 flex-1">
        <div className="w-[7px] shrink-0 border-r-4 border-[#dcdcdc] bg-[#8d8f93]">
          <div className="mt-[50px] h-16 border-y border-[#555] bg-[#c4c6ca]" />
          <div className="mt-5 h-4 bg-[#2e7ce0]" />
          <div className="mt-12 h-3 border-y border-[#555] bg-[#c4c6ca]" />
          <div className="mt-4 h-28 border-y border-[#555] bg-[#b4b6ba]" />
        </div>
        <Navigator />
        <div className="flex min-w-0 flex-1 flex-col bg-[#232428]">
          <div className="flex h-[15px] shrink-0 items-stretch border-b border-[#555] bg-[#e9e9e9]">
            <div className="flex w-[145px] items-center bg-[#4b4b4d] pl-[4px] text-[#e8e8e8]">
              <svg viewBox="0 0 10 10" className="mr-1 size-[10px]">
                <path d="M1 2l4-2-1 4 3-1 3 3-4 4-5-3z" fill="#3d7de8" />
                <path d="M5 5l4 1-3 3z" fill="#d6e6ff" />
              </svg>
              <span className="font-['Liberation_Mono',monospace] text-[8px]">15990538103119424.prt</span>
              <svg viewBox="0 0 7 8" className="ml-1 h-2 w-[7px]">
                <path d="M1 2h5v5H1zM2 1h3" fill="none" stroke="#e0e0e0" strokeWidth="1.200" />
              </svg>
              <button aria-label="关闭" className="ml-1">
                <svg viewBox="0 0 7 7" className="size-[7px]">
                  <path d="M0 0l7 7M7 0L0 7" stroke="#bbb" strokeWidth="1.200" />
                </svg>
              </button>
            </div>
          </div>
          <Model />
        </div>
      </main>
      <Dock />
      <DisplayDialog />
    </div>
  );
}
